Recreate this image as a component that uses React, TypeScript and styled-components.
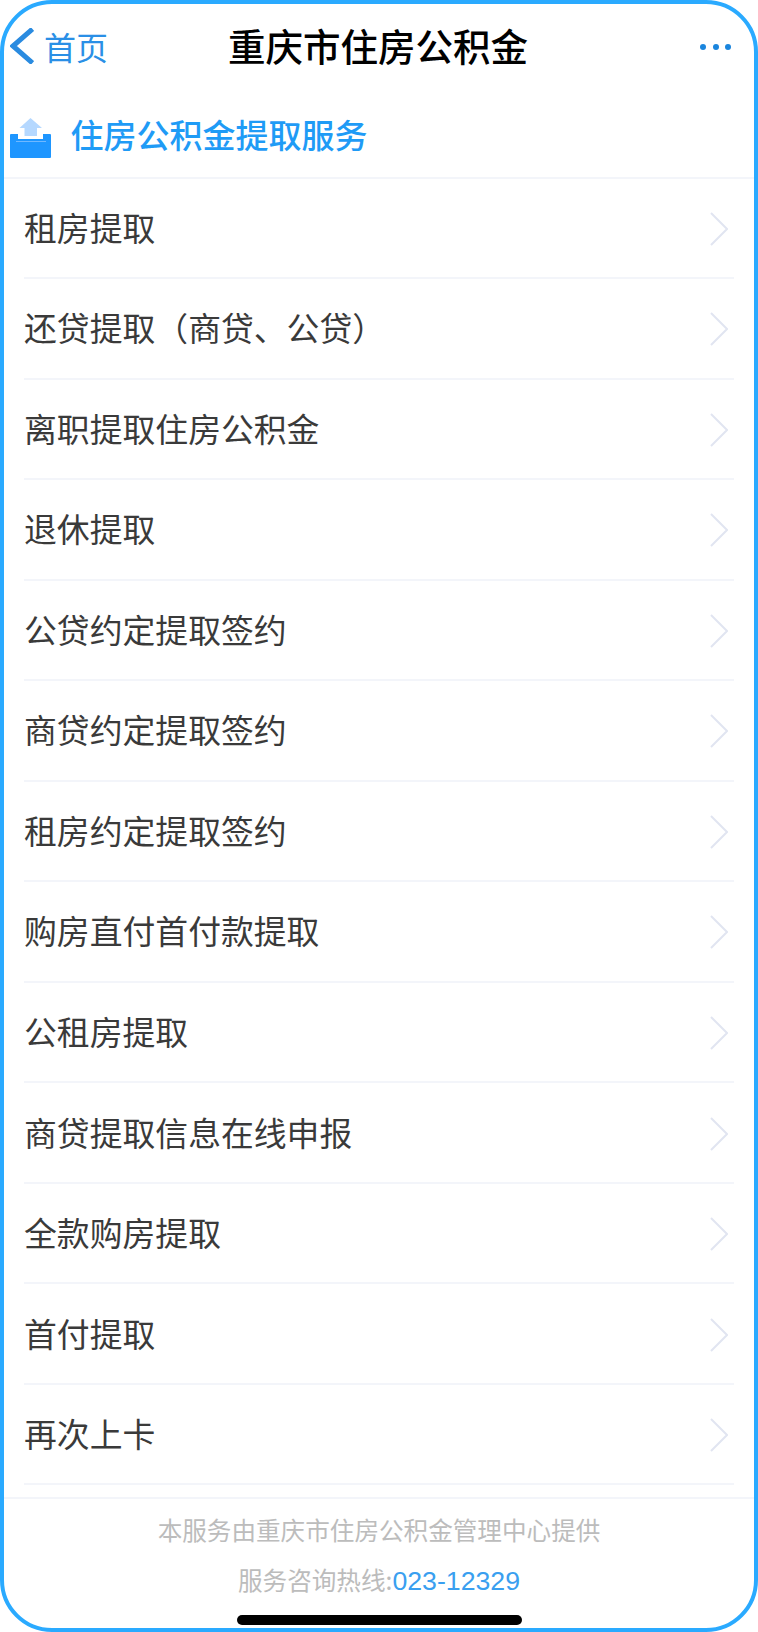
import React from "react";
import styled, { createGlobalStyle } from "styled-components";

const CJK = '"Noto Sans CJK SC", "Liberation Sans", sans-serif';

const Global = createGlobalStyle`
  html, body { margin: 0; padding: 0; background: #ffffff; }
  * { box-sizing: border-box; }
`;

const Frame = styled.div`
  width: 758px;
  height: 1632px;
  border: 4px solid #2aaaff;
  border-radius: 52px;
  background: #ffffff;
  display: flex;
  flex-direction: column;
  overflow: hidden;
  font-family: ${CJK};
  position: relative;
`;

const NavBar = styled.header`
  height: 86px;
  flex: none;
  display: grid;
  grid-template-columns: 150px 1fr 150px;
  align-items: center;
`;

const BackLink = styled.div`
  display: flex;
  align-items: center;
  gap: 10px;
  padding-left: 6px;
  color: #2a8fe6;
  font-size: 32px;
  line-height: 40px;
  padding-bottom: 2px;
`;

const NavTitle = styled.h1`
  margin: 0;
  text-align: center;
  font-size: 37.5px;
  line-height: 46px;
  font-weight: 500;
  color: #000000;
  padding: 0 2px 4px 0;
`;

const MoreDots = styled.div`
  display: flex;
  justify-content: flex-end;
  gap: 6.5px;
  padding-right: 23px;
`;

const Dot = styled.span`
  width: 6px;
  height: 6px;
  border-radius: 50%;
  background: #1a85dd;
`;

const SectionHeader = styled.div`
  height: 88.5px;
  flex: none;
  display: flex;
  align-items: center;
  gap: 20px;
  padding: 6px 0 0 5.5px;
  border-bottom: 2px solid #f3f5fa;

  svg {
    margin-top: 3px;
  }
`;

const SectionTitle = styled.h2`
  margin: 0;
  padding-bottom: 4px;
  font-size: 33px;
  line-height: 44px;
  font-weight: 500;
  color: #1f9bf6;
`;

const List = styled.ul`
  flex: 1;
  min-height: 0;
  margin: 0;
  padding: 0;
  list-style: none;
`;

const Row = styled.li`
  height: 100.54px;
  margin: 0 20px;
  padding-right: 6px;
  display: flex;
  align-items: center;
  justify-content: space-between;
  border-bottom: 2px solid #f3f5fa;
  font-size: 32.85px;
  color: #3a3a3a;

  svg {
    margin-top: 2px;
  }
`;

const RowLabel = styled.span`
  padding-bottom: 3px;
`;

const Footer = styled.footer`
  height: 131px;
  flex: none;
  border-top: 2px solid #f3f5fa;
  padding-top: 5px;
  display: flex;
  flex-direction: column;
  align-items: center;
  font-size: 24.6px;
  line-height: 50px;
  color: #bcbcbc;
`;

const FooterLine = styled.div`
  white-space: nowrap;
`;

const Hotline = styled.span`
  font-family: "Liberation Sans", sans-serif;
  font-size: 26.7px;
  color: #3a9ff0;
`;

const HomeBar = styled.div`
  position: absolute;
  left: 233px;
  bottom: 3px;
  width: 285px;
  height: 10px;
  border-radius: 5px;
  background: #000000;
`;

const BackIcon = () => (
  <svg width="24" height="36" viewBox="0 0 24 36" fill="none">
    <path d="M22.5 1 L3 18 L22.5 35" stroke="#2a8be0" strokeWidth="5" />
  </svg>
);

const TrayIcon = () => (
  <svg width="41" height="40" viewBox="0 0 41 40">
    <path d="M20.5 0 L32 10 L27 10 L27 18 L14.5 18 L14.5 10 L9.5 10 Z" fill="#b5d8ff" />
    <path d="M1 16 L8 16 L8 21 L33 21 L33 16 L40 16 Q41 16 41 17 L41 39 Q41 40 40 40 L1 40 Q0 40 0 39 L0 17 Q0 16 1 16 Z" fill="#1e96ff" />
    <path d="M6 23.5 L36 23.5" stroke="#6fb8ff" strokeWidth="1" />
  </svg>
);

const Chevron = () => (
  <svg width="18" height="34" viewBox="0 0 18 34" fill="none">
    <path d="M1 1 L17 17 L1 33" stroke="#e1e5f1" strokeWidth="2" />
  </svg>
);

const items = [
  "租房提取",
  "还贷提取（商贷、公贷）",
  "离职提取住房公积金",
  "退休提取",
  "公贷约定提取签约",
  "商贷约定提取签约",
  "租房约定提取签约",
  "购房直付首付款提取",
  "公租房提取",
  "商贷提取信息在线申报",
  "全款购房提取",
  "首付提取",
  "再次上卡",
];

export default function App() {
  return (
    <>
      <Global />
      <Frame>
        <NavBar>
          <BackLink>
            <BackIcon />
            <span>首页</span>
          </BackLink>
          <NavTitle>重庆市住房公积金</NavTitle>
          <MoreDots>
            <Dot />
            <Dot />
            <Dot />
          </MoreDots>
        </NavBar>
        <SectionHeader>
          <TrayIcon />
          <SectionTitle>住房公积金提取服务</SectionTitle>
        </SectionHeader>
        <List>
          {items.map((t) => (
            <Row key={t}>
              <RowLabel>{t}</RowLabel>
              <Chevron />
            </Row>
          ))}
        </List>
        <Footer>
          <FooterLine>本服务由重庆市住房公积金管理中心提供</FooterLine>
          <FooterLine>
            服务咨询热线:<Hotline>023-12329</Hotline>
          </FooterLine>
        </Footer>
        <HomeBar />
      </Frame>
    </>
  );
}
